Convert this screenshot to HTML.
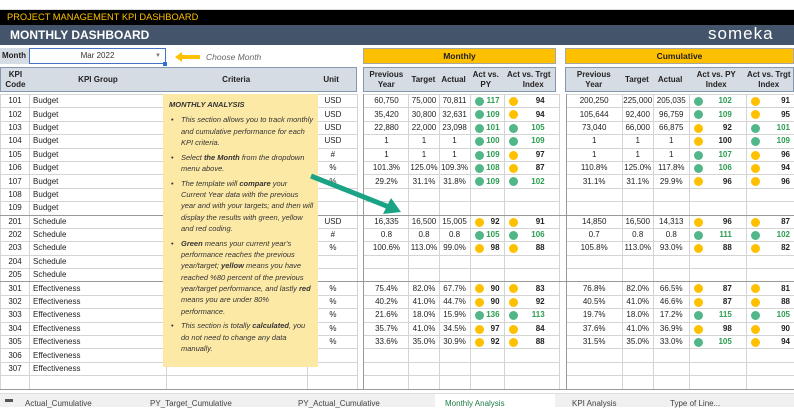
<!DOCTYPE html>
<html><head><meta charset="utf-8"><style>
*{margin:0;padding:0;box-sizing:border-box}
body{width:794px;height:407px;overflow:hidden;background:#fff;font-family:"Liberation Sans",sans-serif;position:relative;font-size:8px;color:#222}
.abs{position:absolute}
table{border-collapse:collapse;table-layout:fixed;position:absolute;left:0;top:94px;width:795px}
td{height:13.4px;border:1px solid #d4d4d4;text-align:center;white-space:nowrap;overflow:hidden;padding:0;line-height:12px;font-size:8px;position:relative}
td.l{text-align:left;padding-left:3px}
td.gap{border-top:none;border-bottom:none;border-left:1px solid #999;border-right:1px solid #999;background:#fff}
tr.sep td{border-bottom:1.5px solid #999}
td.i{text-align:right;padding-right:4px;font-weight:bold}
td.i b{position:absolute;left:4px;top:2px;width:9px;height:9px;border-radius:50%}
td.w{padding-right:14px}
.G b{background:#52b788}.Y b{background:#ffc000}
.G{color:#2a9d50}
.hd{position:absolute;top:67px;height:25px;background:#d6dce4;border:1px solid #8497b0;font-weight:bold;font-size:8px;display:flex;align-items:center;text-align:center;line-height:10px}
.hd div{text-align:center}
.note{position:absolute;left:163px;top:94px;width:155px;height:273px;background:#fde9a6;font-style:italic;font-size:7.5px;line-height:11.3px;color:#333;padding:3px 4px 0 6px}
.note ul{list-style:none}
.note li{position:relative;padding-left:12px;margin-bottom:3.5px}
.note li:before{content:"•";position:absolute;left:2px;font-style:normal}
</style></head><body>
<div class="abs" style="left:0;top:0;width:794px;height:10px;background:#fff;border-bottom:1px solid #ddd"></div>
<div class="abs" style="left:0;top:10px;width:794px;height:15px;background:#000;color:#ffc000;font-size:9.3px;line-height:15px;padding-left:7px">PROJECT MANAGEMENT KPI DASHBOARD</div>
<div class="abs" style="left:0;top:25px;width:794px;height:20px;background:#44546a;color:#fff;font-size:12px;font-weight:bold;line-height:21px;padding-left:10px">MONTHLY DASHBOARD</div>
<div class="abs" style="left:708px;top:23px;color:#fff;font-size:17px;letter-spacing:1px;line-height:22px">someka</div>
<div class="abs" style="left:0;top:48px;width:29px;height:16px;background:#d6dce4;font-weight:bold;line-height:16px;padding-left:2px">Month</div>
<div class="abs" style="left:29px;top:48px;width:137px;height:16px;background:#fff;border:1px solid #4472c4;text-align:center;line-height:14px;color:#333">Mar 2022<span style="position:absolute;right:4px;color:#777;font-size:6px">▼</span></div>
<div class="abs" style="left:163px;top:62px;width:4px;height:4px;background:#2f6fd0"></div>
<svg class="abs" style="left:175px;top:52px" width="26" height="10"><polygon points="0,5 7,0 7,3 25,3 25,7 7,7 7,10" fill="#ffc000"/></svg>
<div class="abs" style="left:206px;top:52px;font-style:italic;color:#666;font-size:8.5px">Choose Month</div>
<div class="abs" style="left:363px;top:48px;width:193px;height:16px;background:#ffc000;border:1px solid #a6a6a6;font-weight:bold;text-align:center;line-height:15px;font-size:8.5px">Monthly</div>
<div class="abs" style="left:565px;top:48px;width:229px;height:16px;background:#ffc000;border:1px solid #a6a6a6;font-weight:bold;text-align:center;line-height:15px;font-size:8.5px">Cumulative</div>
<div class="hd" style="left:0;width:357px"><div style="width:29px">KPI<br>Code</div><div style="width:137px">KPI Group</div><div style="width:141px">Criteria</div><div style="width:50px">Unit</div></div>
<div class="hd" style="left:363px;width:193px"><div style="width:45px">Previous<br>Year</div><div style="width:30px">Target</div><div style="width:31px">Actual</div><div style="width:34px">Act vs.<br>PY</div><div style="width:53px">Act vs. Trgt<br>&nbsp;&nbsp;&nbsp;&nbsp;Index</div></div>
<div class="hd" style="left:565px;width:229px"><div style="width:56px">Previous<br>Year</div><div style="width:31px">Target</div><div style="width:36px">Actual</div><div style="width:57px">Act vs. PY<br>Index</div><div style="width:49px">Act vs. Trgt<br>Index</div></div>
<table>
<colgroup><col style="width:29px"><col style="width:137px"><col style="width:141px"><col style="width:50px"><col style="width:6px"><col style="width:45px"><col style="width:30px"><col style="width:31px"><col style="width:34px"><col style="width:55px"><col style="width:7px"><col style="width:56px"><col style="width:31px"><col style="width:36px"><col style="width:57px"><col style="width:48px"></colgroup>
<tr><td>101</td><td class="l">Budget</td><td></td><td>USD</td><td class="gap"></td><td>60,750</td><td>75,000</td><td>70,811</td><td class="i G"><b></b>117</td><td class="i w Y"><b></b>94</td><td class="gap"></td><td>200,250</td><td>225,000</td><td>205,035</td><td class="i w G"><b></b>102</td><td class="i Y"><b></b>91</td></tr>
<tr><td>102</td><td class="l">Budget</td><td></td><td>USD</td><td class="gap"></td><td>35,420</td><td>30,800</td><td>32,631</td><td class="i G"><b></b>109</td><td class="i w Y"><b></b>94</td><td class="gap"></td><td>105,644</td><td>92,400</td><td>96,759</td><td class="i w G"><b></b>109</td><td class="i Y"><b></b>95</td></tr>
<tr><td>103</td><td class="l">Budget</td><td></td><td>USD</td><td class="gap"></td><td>22,880</td><td>22,000</td><td>23,098</td><td class="i G"><b></b>101</td><td class="i w G"><b></b>105</td><td class="gap"></td><td>73,040</td><td>66,000</td><td>66,875</td><td class="i w Y"><b></b>92</td><td class="i G"><b></b>101</td></tr>
<tr><td>104</td><td class="l">Budget</td><td></td><td>USD</td><td class="gap"></td><td>1</td><td>1</td><td>1</td><td class="i G"><b></b>100</td><td class="i w G"><b></b>109</td><td class="gap"></td><td>1</td><td>1</td><td>1</td><td class="i w Y"><b></b>100</td><td class="i G"><b></b>109</td></tr>
<tr><td>105</td><td class="l">Budget</td><td></td><td>#</td><td class="gap"></td><td>1</td><td>1</td><td>1</td><td class="i G"><b></b>109</td><td class="i w Y"><b></b>97</td><td class="gap"></td><td>1</td><td>1</td><td>1</td><td class="i w G"><b></b>107</td><td class="i Y"><b></b>96</td></tr>
<tr><td>106</td><td class="l">Budget</td><td></td><td>%</td><td class="gap"></td><td>101.3%</td><td>125.0%</td><td>109.3%</td><td class="i G"><b></b>108</td><td class="i w Y"><b></b>87</td><td class="gap"></td><td>110.8%</td><td>125.0%</td><td>117.8%</td><td class="i w G"><b></b>106</td><td class="i Y"><b></b>94</td></tr>
<tr><td>107</td><td class="l">Budget</td><td></td><td>%</td><td class="gap"></td><td>29.2%</td><td>31.1%</td><td>31.8%</td><td class="i G"><b></b>109</td><td class="i w G"><b></b>102</td><td class="gap"></td><td>31.1%</td><td>31.1%</td><td>29.9%</td><td class="i w Y"><b></b>96</td><td class="i Y"><b></b>96</td></tr>
<tr><td>108</td><td class="l">Budget</td><td></td><td></td><td class="gap"></td><td></td><td></td><td></td><td></td><td></td><td class="gap"></td><td></td><td></td><td></td><td></td><td></td></tr>
<tr class="sep"><td>109</td><td class="l">Budget</td><td></td><td></td><td class="gap"></td><td></td><td></td><td></td><td></td><td></td><td class="gap"></td><td></td><td></td><td></td><td></td><td></td></tr>
<tr><td>201</td><td class="l">Schedule</td><td></td><td>USD</td><td class="gap"></td><td>16,335</td><td>16,500</td><td>15,005</td><td class="i Y"><b></b>92</td><td class="i w Y"><b></b>91</td><td class="gap"></td><td>14,850</td><td>16,500</td><td>14,313</td><td class="i w Y"><b></b>96</td><td class="i Y"><b></b>87</td></tr>
<tr><td>202</td><td class="l">Schedule</td><td></td><td>#</td><td class="gap"></td><td>0.8</td><td>0.8</td><td>0.8</td><td class="i G"><b></b>105</td><td class="i w G"><b></b>106</td><td class="gap"></td><td>0.7</td><td>0.8</td><td>0.8</td><td class="i w G"><b></b>111</td><td class="i G"><b></b>102</td></tr>
<tr><td>203</td><td class="l">Schedule</td><td></td><td>%</td><td class="gap"></td><td>100.6%</td><td>113.0%</td><td>99.0%</td><td class="i Y"><b></b>98</td><td class="i w Y"><b></b>88</td><td class="gap"></td><td>105.8%</td><td>113.0%</td><td>93.0%</td><td class="i w Y"><b></b>88</td><td class="i Y"><b></b>82</td></tr>
<tr><td>204</td><td class="l">Schedule</td><td></td><td></td><td class="gap"></td><td></td><td></td><td></td><td></td><td></td><td class="gap"></td><td></td><td></td><td></td><td></td><td></td></tr>
<tr class="sep"><td>205</td><td class="l">Schedule</td><td></td><td></td><td class="gap"></td><td></td><td></td><td></td><td></td><td></td><td class="gap"></td><td></td><td></td><td></td><td></td><td></td></tr>
<tr><td>301</td><td class="l">Effectiveness</td><td></td><td>%</td><td class="gap"></td><td>75.4%</td><td>82.0%</td><td>67.7%</td><td class="i Y"><b></b>90</td><td class="i w Y"><b></b>83</td><td class="gap"></td><td>76.8%</td><td>82.0%</td><td>66.5%</td><td class="i w Y"><b></b>87</td><td class="i Y"><b></b>81</td></tr>
<tr><td>302</td><td class="l">Effectiveness</td><td></td><td>%</td><td class="gap"></td><td>40.2%</td><td>41.0%</td><td>44.7%</td><td class="i Y"><b></b>90</td><td class="i w Y"><b></b>92</td><td class="gap"></td><td>40.5%</td><td>41.0%</td><td>46.6%</td><td class="i w Y"><b></b>87</td><td class="i Y"><b></b>88</td></tr>
<tr><td>303</td><td class="l">Effectiveness</td><td></td><td>%</td><td class="gap"></td><td>21.6%</td><td>18.0%</td><td>15.9%</td><td class="i G"><b></b>136</td><td class="i w G"><b></b>113</td><td class="gap"></td><td>19.7%</td><td>18.0%</td><td>17.2%</td><td class="i w G"><b></b>115</td><td class="i G"><b></b>105</td></tr>
<tr><td>304</td><td class="l">Effectiveness</td><td></td><td>%</td><td class="gap"></td><td>35.7%</td><td>41.0%</td><td>34.5%</td><td class="i Y"><b></b>97</td><td class="i w Y"><b></b>84</td><td class="gap"></td><td>37.6%</td><td>41.0%</td><td>36.9%</td><td class="i w Y"><b></b>98</td><td class="i Y"><b></b>90</td></tr>
<tr><td>305</td><td class="l">Effectiveness</td><td></td><td>%</td><td class="gap"></td><td>33.6%</td><td>35.0%</td><td>30.9%</td><td class="i Y"><b></b>92</td><td class="i w Y"><b></b>88</td><td class="gap"></td><td>31.5%</td><td>35.0%</td><td>33.0%</td><td class="i w G"><b></b>105</td><td class="i Y"><b></b>94</td></tr>
<tr><td>306</td><td class="l">Effectiveness</td><td></td><td></td><td class="gap"></td><td></td><td></td><td></td><td></td><td></td><td class="gap"></td><td></td><td></td><td></td><td></td><td></td></tr>
<tr><td>307</td><td class="l">Effectiveness</td><td></td><td></td><td class="gap"></td><td></td><td></td><td></td><td></td><td></td><td class="gap"></td><td></td><td></td><td></td><td></td><td></td></tr>
<tr class="sep"><td></td><td></td><td></td><td></td><td class="gap"></td><td></td><td></td><td></td><td></td><td></td><td class="gap"></td><td></td><td></td><td></td><td></td><td></td></tr>
</table>
<div class="note">
<div style="font-weight:bold;margin:2px 0 4px">MONTHLY ANALYSIS</div>
<ul>
<li>This section allows you to track monthly and cumulative performance for each KPI criteria.</li>
<li>Select <b>the Month</b> from the dropdown menu above.</li>
<li>The template will <b>compare</b> your Current Year data with the previous year and with your targets; and then will display the results with green, yellow and red coding.</li>
<li><b>Green</b> means your current year's performance reaches the previous year/target; <b>yellow</b> means you have reached %80 percent of the previous year/target performance, and lastly <b>red</b> means you are under 80% performance.</li>
<li>This section is totally <b>calculated</b>, you do not need to change any data manually.</li>
</ul></div>
<svg class="abs" style="left:305px;top:170px" width="100" height="50"><line x1="6" y1="6" x2="84" y2="37" stroke="#1aa384" stroke-width="5"/><polygon points="96,42 78,44 86,28" fill="#1aa384"/></svg>
<div class="abs" style="left:0;top:393px;width:794px;height:14px;background:#f0f0f0;border-top:1px solid #ddd"></div>
<div class="abs" style="left:5px;top:399px;width:8px;height:3px;background:#555"></div>
<div class="abs" style="left:25px;top:399px;font-size:8px;color:#444;white-space:nowrap;word-spacing:1px">Actual_Cumulative</div>
<div class="abs" style="left:150px;top:399px;font-size:8px;color:#444">PY_Target_Cumulative</div>
<div class="abs" style="left:298px;top:399px;font-size:8px;color:#444">PY_Actual_Cumulative</div>
<div class="abs" style="left:435px;top:394px;width:120px;height:13px;background:#fff"></div>
<div class="abs" style="left:445px;top:399px;font-size:8px;color:#1e7b45">Monthly Analysis</div>
<div class="abs" style="left:572px;top:399px;font-size:8px;color:#444">KPI Analysis</div>
<div class="abs" style="left:670px;top:399px;font-size:8px;color:#444">Type of Line...</div>
</body></html>
